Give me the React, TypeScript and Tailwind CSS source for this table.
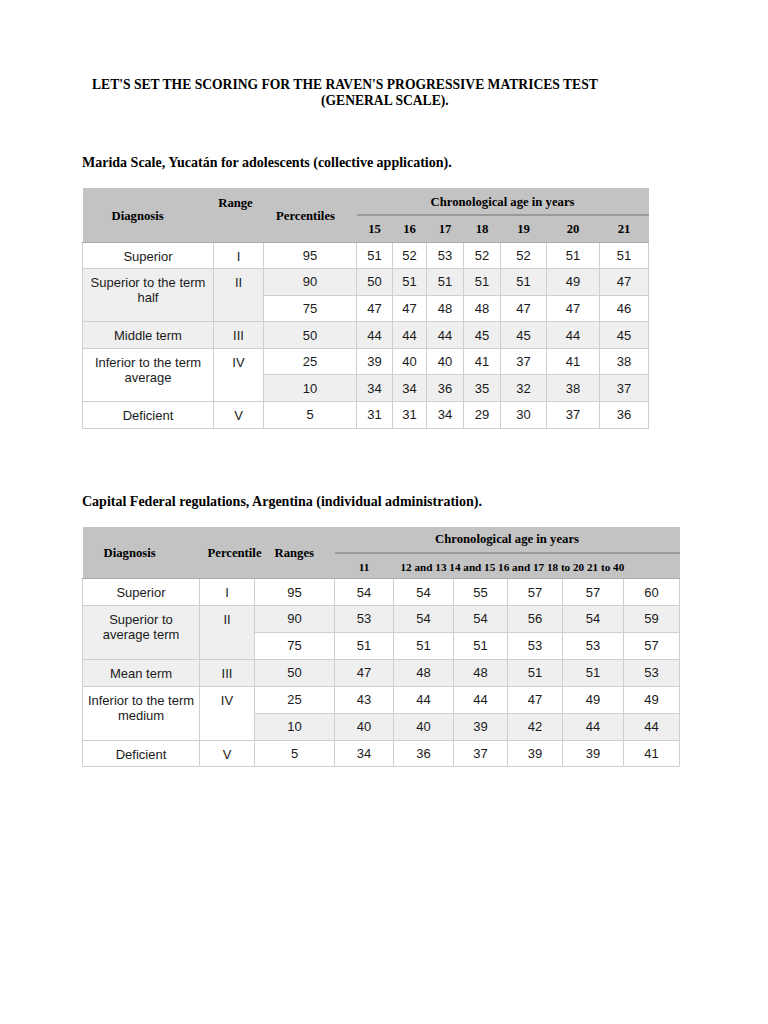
const serif = "font-['Liberation_Serif','Times_New_Roman',serif]";
const sans = "font-['Liberation_Sans',Arial,sans-serif]";

type Row = {
  diag?: string;
  range?: string;
  span?: number;
  pct: string;
  vals: string[];
};

const marida: Row[] = [
  { diag: "Superior", range: "I", span: 1, pct: "95", vals: ["51", "52", "53", "52", "52", "51", "51"] },
  { diag: "Superior to the term half", range: "II", span: 2, pct: "90", vals: ["50", "51", "51", "51", "51", "49", "47"] },
  { pct: "75", vals: ["47", "47", "48", "48", "47", "47", "46"] },
  { diag: "Middle term", range: "III", span: 1, pct: "50", vals: ["44", "44", "44", "45", "45", "44", "45"] },
  { diag: "Inferior to the term average", range: "IV", span: 2, pct: "25", vals: ["39", "40", "40", "41", "37", "41", "38"] },
  { pct: "10", vals: ["34", "34", "36", "35", "32", "38", "37"] },
  { diag: "Deficient", range: "V", span: 1, pct: "5", vals: ["31", "31", "34", "29", "30", "37", "36"] },
];

const capital: Row[] = [
  { diag: "Superior", range: "I", span: 1, pct: "95", vals: ["54", "54", "55", "57", "57", "60"] },
  { diag: "Superior to average term", range: "II", span: 2, pct: "90", vals: ["53", "54", "54", "56", "54", "59"] },
  { pct: "75", vals: ["51", "51", "51", "53", "53", "57"] },
  { diag: "Mean term", range: "III", span: 1, pct: "50", vals: ["47", "48", "48", "51", "51", "53"] },
  { diag: "Inferior to the term medium", range: "IV", span: 2, pct: "25", vals: ["43", "44", "44", "47", "49", "49"] },
  { pct: "10", vals: ["40", "40", "39", "42", "44", "44"] },
  { diag: "Deficient", range: "V", span: 1, pct: "5", vals: ["34", "36", "37", "39", "39", "41"] },
];

const td = "border border-[#cfcfcf] text-center align-middle p-0";

const Body = ({ rows, diagPad, rowH }: { rows: Row[]; diagPad: string; rowH: string }) => (
  <tbody className={`${sans} text-[13px] leading-[15px] text-[#1a1a1a]`}>
    {rows.map((r, i) => (
      <tr key={i} className={`${rowH} ${i % 2 === 1 ? "bg-[#efefef]" : "bg-white"}`}>
        {r.diag && (
          <>
            <td rowSpan={r.span} className={`${td} !align-top pt-[6px] ${diagPad}`}>
              {r.diag}
            </td>
            <td rowSpan={r.span} className={`${td} !align-top pt-[6px]`}>
              {r.range}
            </td>
          </>
        )}
        <td className={td}>{r.pct}</td>
        {r.vals.map((v, j) => (
          <td key={j} className={td}>
            {v}
          </td>
        ))}
      </tr>
    ))}
  </tbody>
);

export default function App() {
  return (
    <div className="w-[768px] min-h-[1024px] bg-white pl-[82px] pt-[77px] text-black">
      <h1 className={`${serif} font-bold text-[13.6px] leading-[16px] pl-[10px] whitespace-nowrap`}>
        LET'S SET THE SCORING FOR THE RAVEN'S PROGRESSIVE MATRICES TEST
      </h1>
      <p className={`${serif} font-bold text-[13.6px] leading-[16px] pl-[239px]`}>(GENERAL SCALE).</p>

      <h2 className={`${serif} font-bold text-[14px] leading-[16px] mt-[46px]`}>
        Marida Scale, Yucatán for adolescents (collective application).
      </h2>

      <table className="mt-[17px] table-fixed border-collapse w-[566px]">
        <colgroup>
          <col className="w-[131px]" />
          <col className="w-[50px]" />
          <col className="w-[93px]" />
          <col className="w-[36px]" />
          <col className="w-[34px]" />
          <col className="w-[37px]" />
          <col className="w-[37px]" />
          <col className="w-[46px]" />
          <col className="w-[53px]" />
          <col className="w-[49px]" />
        </colgroup>
        <thead className={`${serif} font-bold text-[12.7px] leading-[14px] bg-[#c3c3c3]`}>
          <tr className="h-[27px]">
            <th rowSpan={2} className="border-b border-[#a9a9a9] align-middle text-left p-0 pl-[29px] pt-[2px]">
              Diagnosis
            </th>
            <th rowSpan={2} className="border-b border-[#a9a9a9] align-top p-0 pt-[8px] pr-[6px]">Range</th>
            <th rowSpan={2} className="border-b border-[#a9a9a9] align-middle p-0 pt-[2px] pr-[9px]">Percentiles</th>
            <th colSpan={7} className="border-b-2 border-[#9a9a9a] align-middle p-0 pt-[1px]">
              Chronological age in years
            </th>
          </tr>
          <tr className="h-[27px]">
            {["15", "16", "17", "18", "19", "20", "21"].map((y) => (
              <th key={y} className="border-b border-[#a9a9a9] align-middle p-0">
                {y}
              </th>
            ))}
          </tr>
        </thead>
        <Body rows={marida} diagPad="px-[4px]" rowH="h-[26.6px]" />
      </table>

      <h2 className={`${serif} font-bold text-[14px] leading-[16px] mt-[65px]`}>
        Capital Federal regulations, Argentina (individual administration).
      </h2>

      <table className="mt-[17px] table-fixed border-collapse w-[597px]">
        <colgroup>
          <col className="w-[117px]" />
          <col className="w-[55px]" />
          <col className="w-[80px]" />
          <col className="w-[59px]" />
          <col className="w-[60px]" />
          <col className="w-[54px]" />
          <col className="w-[55px]" />
          <col className="w-[61px]" />
          <col className="w-[56px]" />
        </colgroup>
        <thead className={`${serif} font-bold text-[12.7px] leading-[14px] bg-[#c3c3c3]`}>
          <tr className="h-[26px]">
            <th rowSpan={2} className="border-b border-[#a9a9a9] align-middle text-left p-0 pl-[21px] pt-[2px]">
              Diagnosis
            </th>
            <th rowSpan={2} className="border-b border-[#a9a9a9] align-middle text-left p-0 pl-[8px] pt-[2px] whitespace-nowrap overflow-visible">
              Percentile
            </th>
            <th rowSpan={2} className="border-b border-[#a9a9a9] align-middle text-left p-0 pl-[20px] pt-[2px]">
              Ranges
            </th>
            <th colSpan={6} className="border-b-2 border-[#9a9a9a] align-middle p-0">
              Chronological age in years
            </th>
          </tr>
          <tr className="h-[26px]">
            <th className="border-b border-[#a9a9a9] align-middle p-0 pt-[2px] text-[11.2px]">11</th>
            <th colSpan={5} className="border-b border-[#a9a9a9] align-middle text-left p-0 pl-[7px] pt-[2px] text-[11.2px] whitespace-nowrap">
              12 and 13 14 and 15 16 and 17 18 to 20 21 to 40
            </th>
          </tr>
        </thead>
        <Body rows={capital} diagPad="px-[2px]" rowH="h-[26.9px]" />
      </table>
    </div>
  );
}
